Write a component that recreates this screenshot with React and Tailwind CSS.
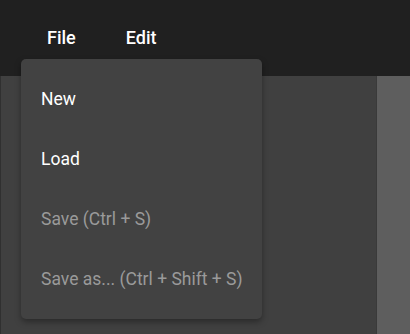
import React from 'react';

const items = [
  { label: 'New', enabled: true },
  { label: 'Load', enabled: true },
  { label: 'Save (Ctrl + S)', enabled: false },
  { label: 'Save as... (Ctrl + Shift + S)', enabled: false },
];

export default function App() {
  return (
    <div className="relative flex h-[334px] w-[410px] flex-col overflow-hidden font-['Roboto',sans-serif]">
      <header className="flex h-[76px] shrink-0 items-center bg-[#202020] pb-[2px] text-[18px] font-medium text-white">
        <button className="ml-[47px]">File</button>
        <button className="ml-[50px]">Edit</button>
      </header>
      <div className="flex flex-1">
        <main className="flex-1 border-l border-[#303030] bg-[#404040]" />
        <aside className="w-[34px] border-l border-[#3a3a3a] bg-[#5e5e5e]" />
      </div>

      <div className="absolute left-[21px] top-[59px] w-[241px] rounded-[5px] bg-[#424242] pb-[10px] pt-[10px] shadow-[0_3px_6px_rgba(0,0,0,0.35)]">
        {items.map((it) => (
          <div
            key={it.label}
            className={
              'flex h-[60px] items-center whitespace-nowrap pl-[20px] text-[17.5px] ' +
              (it.enabled ? 'text-white' : 'text-[#9a9a9a]')
            }
          >
            {it.label}
          </div>
        ))}
      </div>
    </div>
  );
}
